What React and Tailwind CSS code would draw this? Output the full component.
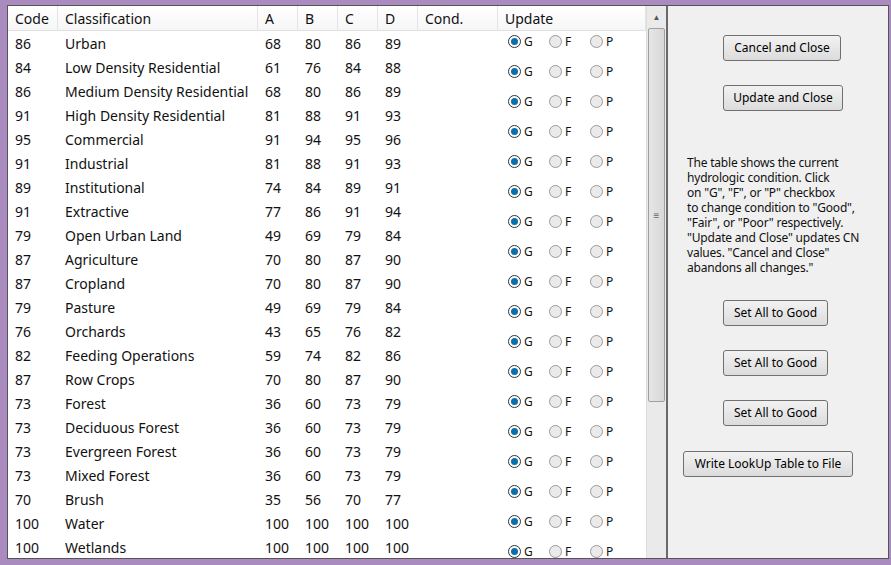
const rows=[["86","Urban",68,80,86,89],["84","Low Density Residential",61,76,84,88],["86","Medium Density Residential",68,80,86,89],["91","High Density Residential",81,88,91,93],["95","Commercial",91,94,95,96],["91","Industrial",81,88,91,93],["89","Institutional",74,84,89,91],["91","Extractive",77,86,91,94],["79","Open Urban Land",49,69,79,84],["87","Agriculture",70,80,87,90],["87","Cropland",70,80,87,90],["79","Pasture",49,69,79,84],["76","Orchards",43,65,76,82],["82","Feeding Operations",59,74,82,86],["87","Row Crops",70,80,87,90],["73","Forest",36,60,73,79],["73","Deciduous Forest",36,60,73,79],["73","Evergreen Forest",36,60,73,79],["73","Mixed Forest",36,60,73,79],["70","Brush",35,56,70,77],["100","Water",100,100,100,100],["100","Wetlands",100,100,100,100]];
const lines=['The table shows the current','hydrologic condition. Click','on "G", "F", or "P" checkbox','to change condition to "Good",','"Fair", or "Poor" respectively.','"Update and Close" updates CN','values. "Cancel and Close"','abandons all changes."'];
const Radio=({on,l})=>(<div className="flex items-center w-[41px]"><span className={"w-[13px] h-[13px] rounded-full border flex items-center justify-center "+(on?"border-[#333] bg-white":"border-[#9a9a9a] bg-[#eaeaea]")}>{on&&<span className="w-[7px] h-[7px] rounded-full bg-[#0a6fa8]"/>}</span><span className="ml-[3px] text-[12px]">{l}</span></div>);
const Btn=({c,w})=>(<button className={"h-[26px] border border-[#707070] rounded-[3px] bg-gradient-to-b from-[#f2f2f2] to-[#dcdcdc] text-[12px] text-black "+w}>{c}</button>);
export default function App(){return(
<div className="w-[891px] h-[565px] bg-[#a98bc0] pt-[5px] pl-[7px] pr-[2px] pb-[6px]" style={{fontFamily:'"Noto Sans","Open Sans",sans-serif'}}>
<div className="flex h-full border border-[#555] overflow-hidden">
<div className="w-[638px] bg-white relative overflow-hidden text-[14px] text-[#111]">
<div className="flex h-[25px] items-center border-b border-[#e0e0e0] bg-gradient-to-b from-white to-[#f6f6f6]">
{[["Code",50],["Classification",200],["A",40],["B",40],["C",40],["D",40],["Cond.",80],["Update",148]].map(([t,w])=>(<div key={t} style={{width:w}} className="pl-[7px] border-r border-[#e4e4e4] h-full flex items-center">{t}</div>))}
</div>
{rows.map(r=>(<div key={r[1]} className="flex h-[24px] items-center">
<div className="w-[50px] pl-[7px]">{r[0]}</div><div className="w-[200px] pl-[7px] whitespace-nowrap">{r[1]}</div>
{r.slice(2).map((v,i)=><div key={i} className="w-[40px] pl-[7px]">{v}</div>)}
</div>))}
<div className="absolute left-[500px] top-[29px] flex flex-col gap-[17px]">
{rows.map(r=>(<div key={r[1]} className="flex h-[13px]"><Radio on l="G"/><Radio l="F"/><Radio l="P"/></div>))}
</div>
</div>
<div className="w-[20px] bg-[#eaeaea] flex flex-col items-center border-l border-[#ddd]">
<div className="h-[22px] text-[8px] text-[#555] flex items-center">▲</div>
<div className="w-[17px] h-[374px] bg-gradient-to-r from-[#e6e6e6] to-[#d8d8d8] border border-[#a0a0a0] rounded-[2px] flex items-center justify-center text-[10px] text-[#666]">≡</div>
</div>
<div className="w-[2px] bg-[#6a6a6a]"/>
<div className="flex-1 bg-[#f0f0f0] flex flex-col items-start">
<div className="pl-[55px] pt-[29px] flex flex-col gap-[24px]"><Btn c="Cancel and Close" w="w-[118px]"/><Btn c="Update and Close" w="w-[120px]"/></div>
<p className="pl-[19px] pt-[44px] text-[12px] leading-[15px] text-[#111] whitespace-nowrap tracking-[-0.2px]">{lines.map(l=><span key={l} className="block">{l}</span>)}</p>
<div className="pl-[55px] pt-[25px] flex flex-col gap-[24px]"><Btn c="Set All to Good" w="w-[105px]"/><Btn c="Set All to Good" w="w-[105px]"/><Btn c="Set All to Good" w="w-[105px]"/></div>
<div className="pl-[15px] pt-[24px]"><Btn c="Write LookUp Table to File" w="w-[170px]"/></div>
</div>
</div></div>)}
